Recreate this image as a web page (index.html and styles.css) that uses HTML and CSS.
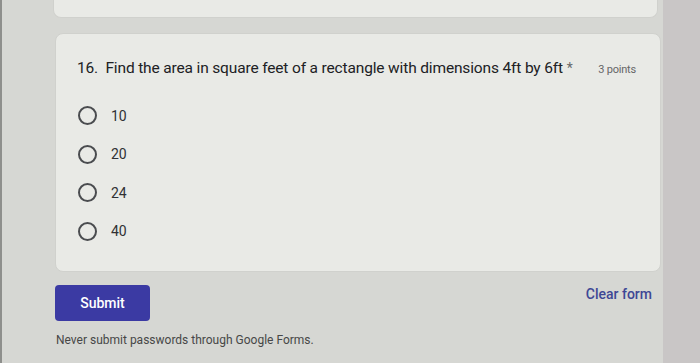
FILE: index.html
```html
<!DOCTYPE html>
<html>
<head>
<meta charset="utf-8">
<link rel="stylesheet" href="styles.css">
</head>
<body>
<div class="screen">
  <div class="edge"></div>
  <div class="main">
    <div class="card prev"></div>
    <div class="card question">
      <div class="qhead">
        <div class="qtitle">16.&nbsp; Find the area in square feet of a rectangle with dimensions 4ft by 6ft <span class="req">*</span></div>
        <div class="points">3 points</div>
      </div>
      <div class="options">
        <label class="opt"><span class="radio"></span><span class="lbl">10</span></label>
        <label class="opt"><span class="radio"></span><span class="lbl">20</span></label>
        <label class="opt"><span class="radio"></span><span class="lbl">24</span></label>
        <label class="opt"><span class="radio"></span><span class="lbl">40</span></label>
      </div>
    </div>
    <div class="actions">
      <button class="submit">Submit</button>
      <span class="clear">Clear form</span>
    </div>
    <div class="note">Never submit passwords through Google Forms.</div>
  </div>
  <div class="bezel"></div>
</div>
</body>
</html>
```
FILE: styles.css
```css
html, body {
  margin: 0;
  padding: 0;
}
body {
  width: 700px;
  height: 363px;
  overflow: hidden;
  background: #d6d7d3;
  font-family: Roboto, "Liberation Sans", Arial, sans-serif;
}
.screen {
  display: flex;
  height: 363px;
}
.edge {
  width: 2px;
  background: #8e8f8c;
}
.main {
  width: 606px;
  margin-left: 53px;
  display: flex;
  flex-direction: column;
}
.bezel {
  flex: 1;
  margin-left: 2px;
  background: #c9c6c6;
}
.card {
  background: #e9eae6;
  border: 1px solid #d0d1cd;
}
.prev {
  height: 17px;
  border-top: none;
  border-radius: 0 0 8px 8px;
  margin-left: -2px;
  margin-right: 3px;
}
.question {
  margin-top: 15px;
  height: 237px;
  border-radius: 8px;
  padding: 0 24px 0 21px;
  box-sizing: content-box;
}
.qhead {
  display: flex;
  align-items: baseline;
  margin-top: 23px;
}
.qtitle {
  font-size: 15.5px;
  line-height: 22px;
  color: #202124;
  letter-spacing: -0.15px;
}
.req {
  color: #6a6a6a;
  font-size: 14px;
}
.points {
  margin-left: auto;
  font-size: 11px;
  color: #666;
  letter-spacing: -0.2px;
}
.options {
  margin-top: 27px;
  display: flex;
  flex-direction: column;
  gap: 19px;
}
.opt {
  display: flex;
  align-items: center;
  height: 19.5px;
}
.radio {
  width: 15px;
  height: 15px;
  border: 2px solid #4a4c4f;
  border-radius: 50%;
  margin-left: 1px;
}
.lbl {
  margin-left: 14px;
  font-size: 14px;
  color: #303134;
}
.actions {
  display: flex;
  align-items: flex-start;
  justify-content: space-between;
  margin-top: 13px;
  padding-right: 9px;
}
.submit {
  width: 95px;
  height: 36px;
  background: #3b3aa3;
  color: #fff;
  border: none;
  border-radius: 4px;
  font-family: inherit;
  font-size: 14px;
  font-weight: 500;
  padding: 0;
}
.clear {
  margin-top: 1px;
  font-size: 14px;
  font-weight: 500;
  color: #3e4795;
}
.note {
  margin-top: 12px;
  margin-left: 1px;
  font-size: 12px;
  color: #474747;
}
```
